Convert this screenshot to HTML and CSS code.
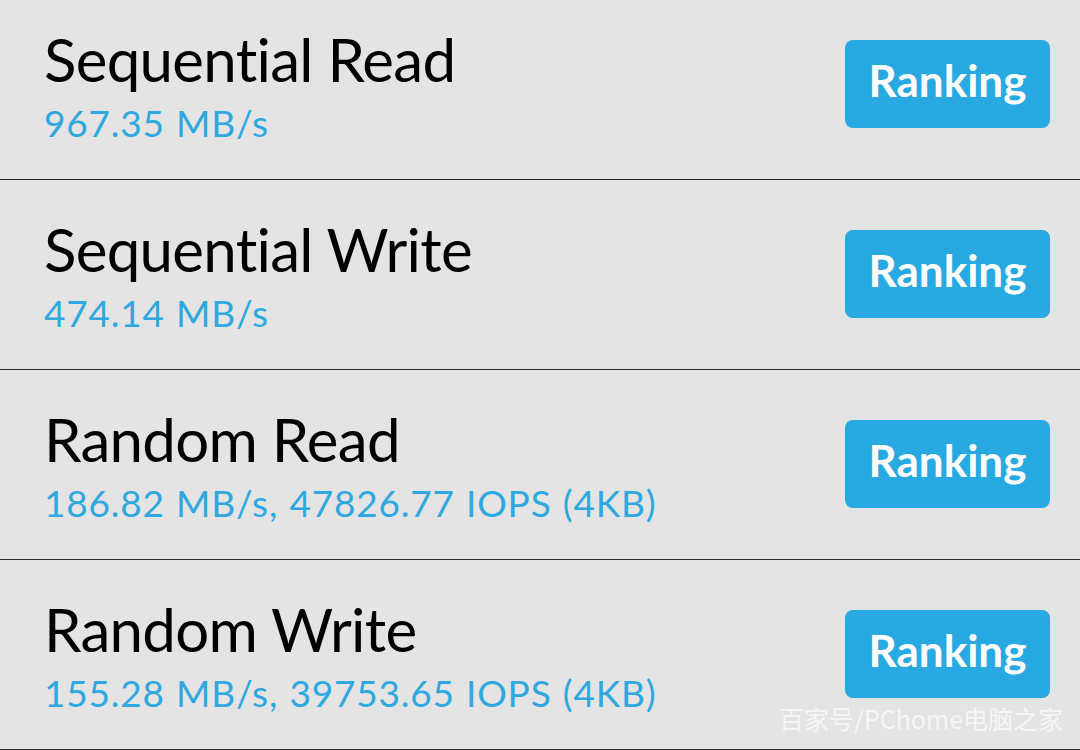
FILE: index.html
```html
<!DOCTYPE html>
<html lang="en">
<head>
  <meta charset="UTF-8" />
  <title>Disk Benchmark</title>
  <link rel="stylesheet" href="styles.css">
</head>
<body>

  <div class="list">
    <div class="row">
      <div class="info">
        <div class="title">Sequential Read</div>
        <div class="value">967.35 MB/s</div>
      </div>
      <button class="rank-btn">Ranking</button>
    </div>
    <div class="row">
      <div class="info">
        <div class="title">Sequential Write</div>
        <div class="value">474.14 MB/s</div>
      </div>
      <button class="rank-btn">Ranking</button>
    </div>
    <div class="row">
      <div class="info">
        <div class="title">Random Read</div>
        <div class="value">186.82 MB/s, 47826.77 IOPS (4KB)</div>
      </div>
      <button class="rank-btn">Ranking</button>
    </div>
    <div class="row">
      <div class="info">
        <div class="title">Random Write</div>
        <div class="value">155.28 MB/s, 39753.65 IOPS (4KB)</div>
      </div>
      <button class="rank-btn">Ranking</button>
    </div>
  </div>

  <div class="watermark">百家号/PChome电脑之家</div>

</body>
</html>
```

FILE: styles.css
```css
html, body {
  height: 100%;
}

body {
  margin: 0;
  font-family: 'Lato', sans-serif;
  background: #e4e4e4;
  color: #000;
  overflow: hidden;
  position: relative;
}

.list {
  margin-top: -10px;
}

.row {
  height: 190px;
  box-sizing: border-box;
  border-bottom: 1px solid #2a2a2a;
  display: flex;
  justify-content: space-between;
  align-items: flex-start;
  padding: 0 30px 0 44px;
}

.info {
  padding-top: 39px;
}

.title {
  font-size: 60px;
  line-height: 60px;
  letter-spacing: -0.7px;
  font-weight: 400;
}

.value {
  margin-top: 15px;
  font-size: 37px;
  line-height: 37px;
  letter-spacing: 0.8px;
  word-spacing: 1px;
  color: #2fa8df;
}

.rank-btn {
  margin-top: 50px;
  width: 205px;
  height: 88px;
  border: none;
  border-radius: 8px;
  background: #29a9e1;
  color: #fff;
  font-family: 'Lato', sans-serif;
  font-weight: 700;
  font-size: 44px;
  padding: 0 0 9px;
  cursor: pointer;
}

.watermark {
  position: absolute;
  right: 17px;
  bottom: 14px;
  font-family: 'Noto Sans CJK SC', sans-serif;
  font-size: 25px;
  color: rgba(255, 255, 255, 0.7);
}
```
